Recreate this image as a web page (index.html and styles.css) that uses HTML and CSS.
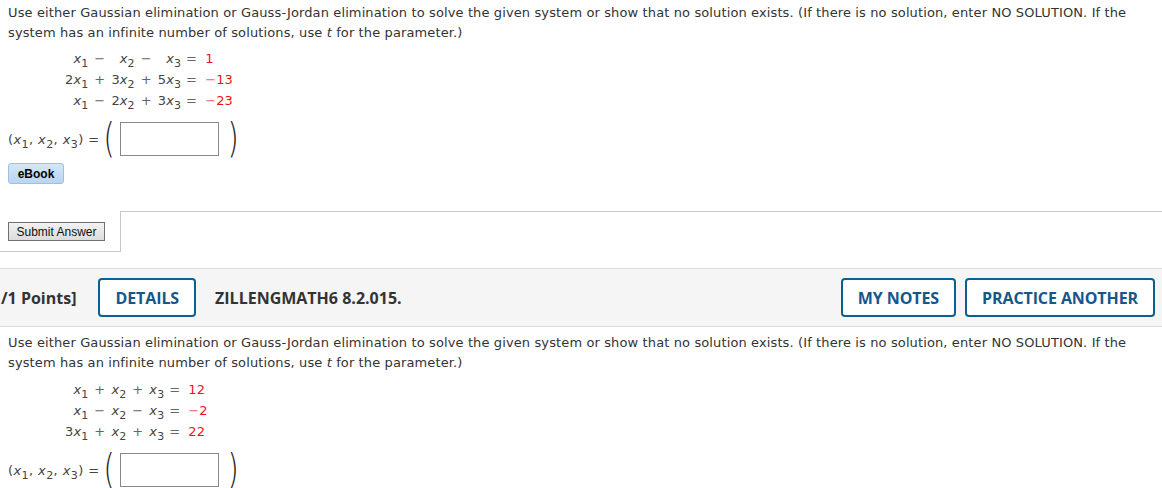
FILE: index.html
```html
<!DOCTYPE html>
<html>
<head>
<meta charset="utf-8">
<link rel="stylesheet" href="styles.css">
</head>
<body>
<div class="question">
  <p class="prompt">Use either Gaussian elimination or Gauss-Jordan elimination to solve the given system or show that no solution exists. (If there is no solution, enter NO SOLUTION. If the system has an infinite number of solutions, use <i>t</i> for the parameter.)</p>
  <table class="eqs">
    <tr><td class="v"><i>x</i><sub>1</sub></td><td class="op">−</td><td class="v"><i>x</i><sub>2</sub></td><td class="op">−</td><td class="v"><i>x</i><sub>3</sub></td><td class="eq">=</td><td class="rhs">1</td></tr>
    <tr><td class="v">2<i>x</i><sub>1</sub></td><td class="op">+</td><td class="v">3<i>x</i><sub>2</sub></td><td class="op">+</td><td class="v">5<i>x</i><sub>3</sub></td><td class="eq">=</td><td class="rhs"><span class="neg">−</span>13</td></tr>
    <tr><td class="v"><i>x</i><sub>1</sub></td><td class="op">−</td><td class="v">2<i>x</i><sub>2</sub></td><td class="op">+</td><td class="v">3<i>x</i><sub>3</sub></td><td class="eq">=</td><td class="rhs"><span class="neg">−</span>23</td></tr>
  </table>
  <div class="answer">
    <span class="lbl">(<i>x</i><sub>1</sub>, <i>x</i><sub>2</sub>, <i>x</i><sub>3</sub>) =</span>
    <span class="paren">(</span>
    <span class="box"></span>
    <span class="paren close">)</span>
  </div>
  <button class="ebook">eBook</button>
</div>

<div class="submit-row">
  <div class="submit-cell"><button class="submit">Submit Answer</button></div>
  <div class="submit-msg"></div>
</div>

<div class="qbar">
  <span class="points">/1 Points]</span>
  <button class="qbtn">DETAILS</button>
  <span class="qid">ZILLENGMATH6 8.2.015.</span>
  <span class="spacer"></span>
  <button class="qbtn">MY NOTES</button>
  <button class="qbtn">PRACTICE ANOTHER</button>
</div>

<div class="question second">
  <p class="prompt">Use either Gaussian elimination or Gauss-Jordan elimination to solve the given system or show that no solution exists. (If there is no solution, enter NO SOLUTION. If the system has an infinite number of solutions, use <i>t</i> for the parameter.)</p>
  <table class="eqs">
    <tr><td class="v"><i>x</i><sub>1</sub></td><td class="op">+</td><td class="v"><i>x</i><sub>2</sub></td><td class="op">+</td><td class="v"><i>x</i><sub>3</sub></td><td class="eq">=</td><td class="rhs">12</td></tr>
    <tr><td class="v"><i>x</i><sub>1</sub></td><td class="op">−</td><td class="v"><i>x</i><sub>2</sub></td><td class="op">−</td><td class="v"><i>x</i><sub>3</sub></td><td class="eq">=</td><td class="rhs"><span class="neg">−</span>2</td></tr>
    <tr><td class="v">3<i>x</i><sub>1</sub></td><td class="op">+</td><td class="v"><i>x</i><sub>2</sub></td><td class="op">+</td><td class="v"><i>x</i><sub>3</sub></td><td class="eq">=</td><td class="rhs">22</td></tr>
  </table>
  <div class="answer">
    <span class="lbl">(<i>x</i><sub>1</sub>, <i>x</i><sub>2</sub>, <i>x</i><sub>3</sub>) =</span>
    <span class="paren">(</span>
    <span class="box"></span>
    <span class="paren close">)</span>
  </div>
</div>
</body>
</html>
```

FILE: styles.css
```css
html, body { margin: 0; padding: 0; background: #fff; }
body {
  font-family: "DejaVu Sans", Verdana, sans-serif;
  font-size: 13px;
  letter-spacing: 0.12px;
  color: #333;
  width: 1162px;
  height: 488px;
  overflow: hidden;
}
.question { padding: 3px 8px 0 8px; }
.question.second { padding-top: 6px; }
.prompt { margin: 0; line-height: 20px; }
.eqs {
  border-collapse: collapse;
  margin: 5px 0 0 57px;
  color: #444;
}
.second .eqs { margin-top: 6px; }
.eqs td { padding: 0; height: 21px; line-height: 21px; white-space: nowrap; }
.eqs td.v { text-align: right; }
.eqs td.op { padding: 0 6px; color: #666; text-align: center; }
.eqs td.eq { padding: 0 5px; color: #666; }
.eqs td.rhs { color: #e8141c; padding-left: 3px; }
.neg { color: #f06070; }
i { font-style: italic; }
sub { font-size: 11px; vertical-align: -4px; line-height: 0; }
.answer {
  display: flex;
  align-items: center;
  height: 44px;
  margin-top: 6px;
  color: #444;
}
.lbl { margin-right: 2px; letter-spacing: 0.4px; }
.paren {
  font-family: "DejaVu Sans", sans-serif;
  font-weight: 300;
  font-size: 41px;
  line-height: 44px;
  color: #222;
  transform: scaleX(0.7);
  margin: -2px 0 0 0;
}
.close { margin-left: 6px; }
.box {
  width: 97px;
  height: 32px;
  border: 1px solid #888;
  margin-left: 2px;
  background: #fff;
}
.ebook {
  display: block;
  margin-top: 2px;
  width: 56px;
  height: 21px;
  padding: 0;
  font-family: "Liberation Sans", Arial, sans-serif;
  font-weight: bold;
  font-size: 12px;
  letter-spacing: 0;
  color: #000;
  border: 1px solid #9cc1e4;
  border-radius: 3px;
  background: linear-gradient(#d3e6f7, #b9d6f0);
}
.submit-row {
  display: flex;
  margin-top: 27px;
  height: 41px;
}
.submit-cell {
  width: 120px;
  border-bottom: 1px solid #c8c8c8;
  box-sizing: border-box;
  padding: 11px 0 0 8px;
}
.submit-msg {
  flex: 1;
  border-top: 1px solid #c8c8c8;
  border-left: 1px solid #c8c8c8;
  height: 40px;
}
.submit {
  width: 97px;
  height: 19px;
  padding: 0;
  font-family: "Liberation Sans", Arial, sans-serif;
  font-size: 12px;
  letter-spacing: 0;
  color: #111;
  border: 1px solid #707070;
  border-radius: 0;
  background: linear-gradient(#f2f2f2, #dcdcdc);
}
.qbar {
  margin-top: 16px;
  height: 57px;
  border-top: 1px solid #dcdcdc;
  border-bottom: 1px solid #dcdcdc;
  background: #f5f5f5;
  display: flex;
  align-items: center;
  padding: 0 7px 0 1px;
  font-family: "Open Sans", sans-serif;
  font-weight: 700;
  font-size: 16px;
  letter-spacing: 0;
}
.points { color: #333; margin-right: 22px; }
.qid { color: #333; margin-left: 19px; }
.spacer { flex: 1; }
.qbtn {
  font-family: "Open Sans", sans-serif;
  font-weight: 700;
  font-size: 16px;
  letter-spacing: -0.1px;
  color: #15578a;
  background: #fff;
  border: 2px solid #0c6090;
  border-radius: 4px;
  height: 39px;
  padding: 0 15px;
  margin-left: 9px;
}
.points + .qbtn { margin-left: 0; }
```
